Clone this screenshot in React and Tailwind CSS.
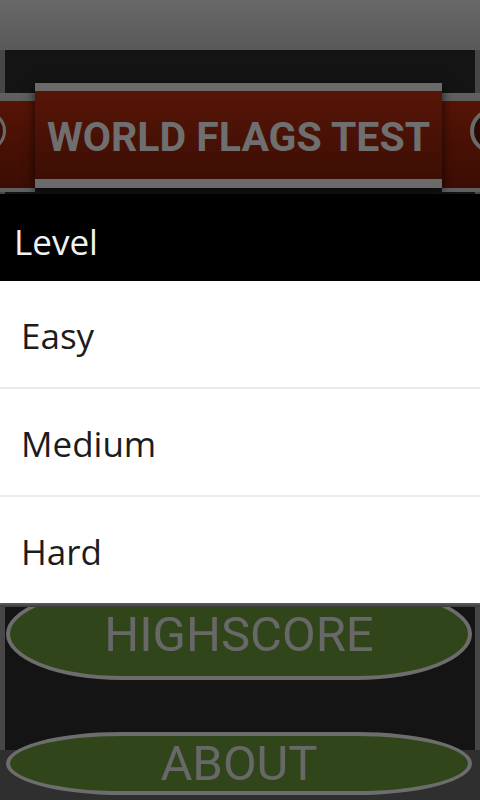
import React from "react";

const levels = ["Easy", "Medium", "Hard"];

function Pill({ label, className }) {
  return (
    <div
      className={
        "ml-[1px] w-[466px] shrink-0 rounded-[115px/50%] border-[4px] border-[#6d6d6d] bg-[#30461a] flex items-center justify-center " +
        className
      }
    >
      <span className="font-['Roboto',sans-serif] text-[49px] leading-none text-[#686868]">
        {label}
      </span>
    </div>
  );
}

function Banner() {
  return (
    <div className="relative -mx-[5px] mt-[33px] flex h-[109px] shrink-0 items-start">
      {/* side strips */}
      <div className="mt-[10px] h-[99px] w-[35px] border-t-[8px] border-b-[4px] border-[#5f5f5f] bg-gradient-to-b from-[#561406] to-[#3b0d04]" />
      <div className="relative z-10 flex h-[105px] w-[407px] items-center justify-center border-t-[8px] border-b-[9px] border-[#6a6a6a] bg-gradient-to-b from-[#571507] to-[#3d0e05] pt-[5px] shadow-[0_3px_10px_rgba(0,0,0,0.7)]">
        <span className="font-['Roboto',sans-serif] text-[41px] font-bold leading-none text-[#6f6f6f]">
          WORLD FLAGS TEST
        </span>
      </div>
      <div className="mt-[10px] h-[99px] flex-1 border-t-[8px] border-b-[4px] border-[#5f5f5f] bg-gradient-to-b from-[#561406] to-[#3b0d04]" />

      {/* cut-off medallions at the edges */}
      <div className="absolute left-[-34px] top-[28px] h-[40px] w-[40px] rounded-full border-[3px] border-[#6a6a6a] bg-[#3a0d05]" />
      <div className="absolute left-[470px] top-[26px] h-[44px] w-[44px] rounded-full border-[4px] border-[#6a6a6a] bg-[#2a0a04]" />
    </div>
  );
}

export default function App() {
  return (
    <div className="relative h-[800px] w-[480px] overflow-hidden bg-[#2f2f2f] font-['Open_Sans',sans-serif]">
      <div className="h-[50px] bg-gradient-to-b from-[#686868] to-[#595959]" />

      <div className="flex h-[700px] flex-col border-x-[5px] border-[#474747] bg-[#141414]">
        <Banner />
        <div className="h-[396px] shrink-0" />
        <Pill label="HIGHSCORE" className="h-[92px]" />
        <div className="h-[52px] shrink-0" />
        <Pill label="ABOUT" className="h-[63px]" />
      </div>

      {/* level picker dialog */}
      <div className="absolute left-0 top-[194px] w-full">
        <div className="flex h-[87px] items-center bg-black pl-[14px] pt-[8px]">
          <span className="text-[35px] leading-none text-[#f2f2f2]">Level</span>
        </div>
        <div className="bg-white">
          {levels.map((lvl, i) => (
            <div
              key={lvl}
              className={
                "flex items-center pl-[21px] pt-[3px] " +
                (i < levels.length - 1 ? "h-[108px] border-b-2 border-[#ebebeb]" : "h-[106px]")
              }
            >
              <span className="text-[35px] leading-none text-[#1c1c1c]">{lvl}</span>
            </div>
          ))}
        </div>
        <div className="h-[4px] bg-gradient-to-b from-[#5e5e5e] to-[#3a3a3a]" />
      </div>
    </div>
  );
}
